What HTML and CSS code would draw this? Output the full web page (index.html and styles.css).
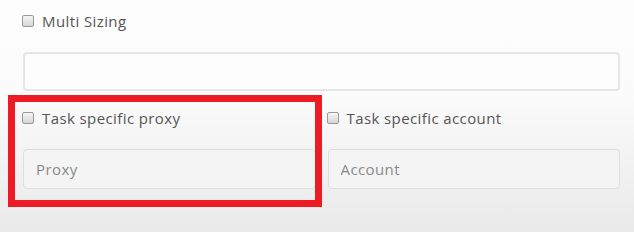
FILE: index.html
```html
<!DOCTYPE html>
<html lang="en">
<head>
  <meta charset="UTF-8">
  <meta name="viewport" content="width=device-width, initial-scale=1.0">
  <title>Task options</title>
  <link rel="stylesheet" href="styles.css">
</head>
<body>
  <div class="page">
    <form class="form">
      <label class="check check_top">
        <input type="checkbox">
        <span>Multi Sizing</span>
      </label>
      <input class="field field_wide" type="text">
      <div class="col">
        <label class="check">
          <input type="checkbox">
          <span>Task specific proxy</span>
        </label>
        <input class="field" type="text" placeholder="Proxy">
      </div>
      <div class="col">
        <label class="check">
          <input type="checkbox">
          <span>Task specific account</span>
        </label>
        <input class="field" type="text" placeholder="Account">
      </div>
    </form>
    <!-- 红框标注 -->
    <div class="mark"></div>
  </div>
</body>
</html>
```

FILE: styles.css
```css
* {
  margin: 0;
  padding: 0;
  box-sizing: border-box;
}
:root {
  --text: #555;
  --hint: #8a8a8a;
  --line: #dedede;
  --red: #ed1c24;
}
body {
  width: 634px;
  height: 232px;
  overflow: hidden;
  font-family: "Open Sans", "Noto Sans", sans-serif;
  letter-spacing: 0.4px;
  background: linear-gradient(to bottom, #fdfdfd 0%, #fbfbfb 40%, #e9e9e9 100%);
}
.page {
  position: relative;
  height: 100%;
}
.form {
  display: grid;
  grid-template-columns: 1fr 1fr;
  column-gap: 12px;
  width: 597px;
  margin-left: 23px;
  padding-top: 12px;
}
.check {
  display: flex;
  align-items: center;
  height: 18px;
  font-size: 15px;
  color: var(--text);
  margin: 18px 0 22px;
}
.check_top {
  grid-column: 1 / 3;
  margin: 0 0 22px;
}
.check input {
  appearance: none;
  flex: none;
  width: 12px;
  height: 12px;
  margin: 0 8px 0 -1px;
  border: 1px solid #999;
  border-radius: 2px;
  background: linear-gradient(to bottom, #f5f5f5, #d6d6d6);
}
.field {
  display: block;
  width: 100%;
  height: 40px;
  padding: 0 12px;
  border: 1px solid var(--line);
  border-radius: 4px;
  font-family: inherit;
  font-size: 15px;
  letter-spacing: 0.4px;
  color: var(--text);
  background-color: #f4f4f4;
  outline: none;
}
.field::placeholder {
  color: var(--hint);
}
.field_wide {
  grid-column: 1 / 3;
  height: 39px;
  border: 2px solid #e6e6e6;
  background-color: #fdfdfd;
}
.mark {
  position: absolute;
  left: 8px;
  top: 95px;
  width: 314px;
  height: 112px;
  border: 7px solid var(--red);
}
```
